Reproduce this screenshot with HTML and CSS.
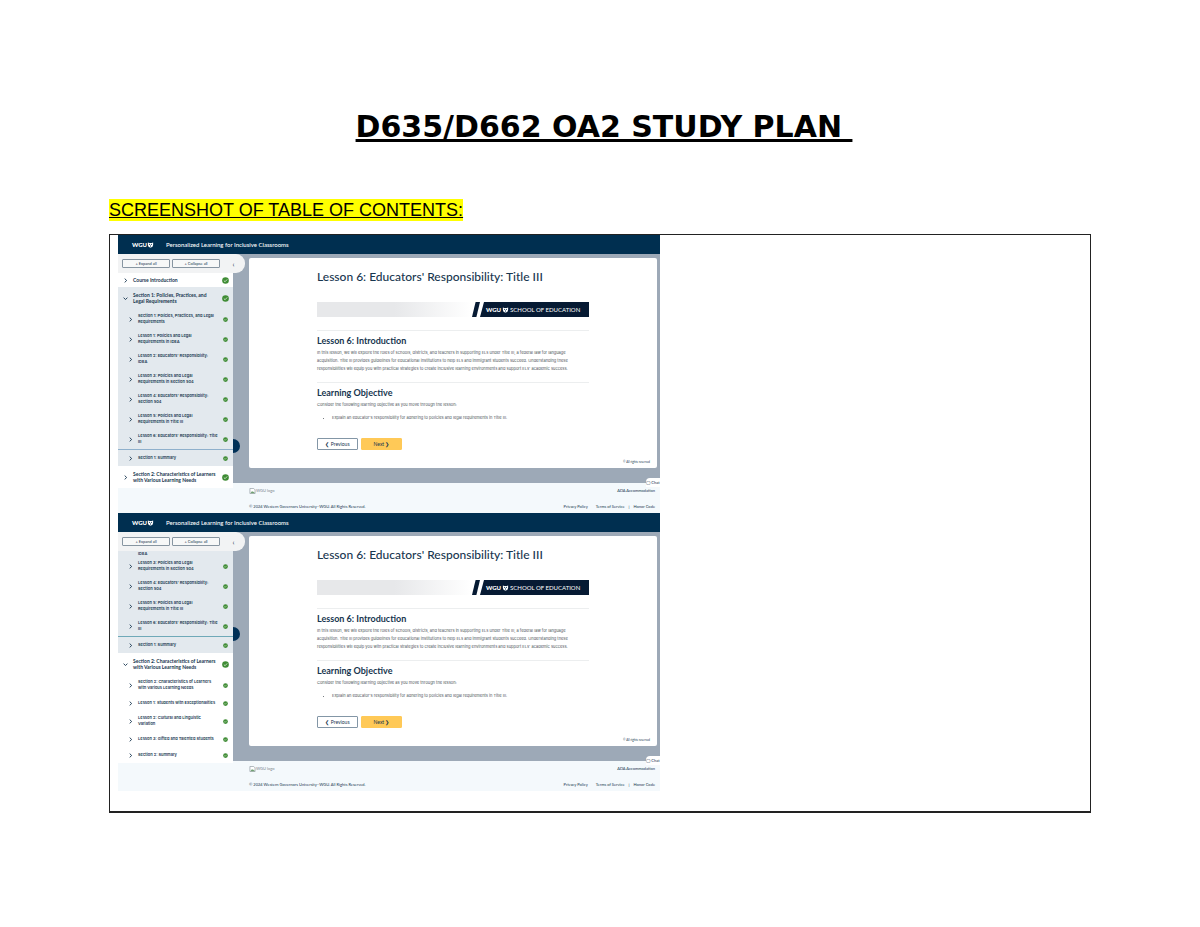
FILE: index.html
```html
<!DOCTYPE html>
<html lang="en">
<head>
  <meta charset="utf-8">
  <title>D635/D662 OA2 Study Plan</title>
  <link rel="stylesheet" href="styles.css">
</head>
<body>

  <!-- Shared icons -->
  <svg class="sprite" aria-hidden="true">
    <symbol id="chev" viewBox="0 0 6 6"><path d="M2 0.7 L4.4 3 L2 5.3" fill="none" stroke="#17364f" stroke-width="1.1"/></symbol>
    <symbol id="chev-down" viewBox="0 0 6 6"><path d="M0.7 2 L3 4.2 L5.3 2" fill="none" stroke="#17364f" stroke-width="1.1"/></symbol>
    <symbol id="check" viewBox="0 0 8 8"><circle cx="4" cy="4" r="3.8" fill="#3f8c35"/><path d="M2.1 4.1 L3.5 5.4 L5.9 2.8" fill="none" stroke="#e4f2e0" stroke-width="0.9"/></symbol>
    <symbol id="owl" viewBox="0 0 8 8"><path d="M0.5 0.5 L2.4 1.2 H5.6 L7.5 0.5 V4 Q7.5 6.5 4 7.8 Q0.5 6.5 0.5 4 Z" fill="#fff"/><circle cx="2.7" cy="3" r="0.8" fill="#002f50"/><circle cx="5.3" cy="3" r="0.8" fill="#002f50"/><path d="M4 4 V7" stroke="#002f50" stroke-width="0.7"/></symbol>
    <symbol id="broken" viewBox="0 0 7 7"><path d="M0.5 0.5 H4.8 L6.5 2.2 V6.5 H0.5 Z" fill="#fff" stroke="#8d979e" stroke-width="0.8"/><path d="M1 6 L3 3.5 L4.3 5 L5.2 4.2 L6 6 Z" fill="#6f9f72"/></symbol>
  </svg>

  <main class="page">
    <h1 class="title">D635/D662 OA2 STUDY PLAN&nbsp;</h1>
    <h2 class="subtitle"><mark>SCREENSHOT OF TABLE OF CONTENTS:</mark></h2>

    <div class="frame">

      <section class="shot">
        <header class="topbar">
          <span class="logo">WGU<svg><use href="#owl"/></svg></span>
          <span class="course">Personalized Learning for Inclusive Classrooms</span>
        </header>
        <div class="body">
          <nav class="sidebar">
            <div class="controls">
              <button class="ctl">+ Expand all</button>
              <button class="ctl">+ Collapse all</button>
              <button class="fold" aria-label="Hide menu">‹</button>
            </div>
            <div class="row intro"><svg class="arrow"><use href="#chev"/></svg><a href="#">Course Introduction</a><svg class="tick"><use href="#check"/></svg></div>
            <div class="row head shade"><svg class="arrow"><use href="#chev-down"/></svg><a href="#">Section 1: Policies, Practices, and<br>Legal Requirements</a><svg class="tick"><use href="#check"/></svg></div>
            <div class="row sub shade"><svg class="arrow"><use href="#chev"/></svg><a href="#">Section 1: Policies, Practices, and Legal<br>Requirements</a><svg class="tick"><use href="#check"/></svg></div>
            <div class="row sub shade"><svg class="arrow"><use href="#chev"/></svg><a href="#">Lesson 1: Policies and Legal<br>Requirements in IDEA</a><svg class="tick"><use href="#check"/></svg></div>
            <div class="row sub shade"><svg class="arrow"><use href="#chev"/></svg><a href="#">Lesson 2: Educators' Responsibility:<br>IDEA</a><svg class="tick"><use href="#check"/></svg></div>
            <div class="row sub shade"><svg class="arrow"><use href="#chev"/></svg><a href="#">Lesson 3: Policies and Legal<br>Requirements in Section 504</a><svg class="tick"><use href="#check"/></svg></div>
            <div class="row sub shade"><svg class="arrow"><use href="#chev"/></svg><a href="#">Lesson 4: Educators' Responsibility:<br>Section 504</a><svg class="tick"><use href="#check"/></svg></div>
            <div class="row sub shade"><svg class="arrow"><use href="#chev"/></svg><a href="#">Lesson 5: Policies and Legal<br>Requirements in Title III</a><svg class="tick"><use href="#check"/></svg></div>
            <div class="row sub shade current"><svg class="arrow"><use href="#chev"/></svg><a href="#">Lesson 6: Educators' Responsibility: Title<br>III</a><svg class="tick"><use href="#check"/></svg></div>
            <div class="row sub shade short"><svg class="arrow"><use href="#chev"/></svg><a href="#">Section 1: Summary</a><svg class="tick"><use href="#check"/></svg></div>
            <div class="row head"><svg class="arrow"><use href="#chev"/></svg><a href="#">Section 2: Characteristics of Learners<br>with Various Learning Needs</a><svg class="tick"><use href="#check"/></svg></div>
          </nav>
          <article class="card">
            <h3>Lesson 6: Educators' Responsibility: Title III</h3>
            <div class="banner">
              <span class="fade"></span>
              <span class="slash"></span>
              <span class="school"><b>WGU</b><svg><use href="#owl"/></svg>SCHOOL OF EDUCATION</span>
            </div>
            <section class="part">
              <h4>Lesson 6: Introduction</h4>
              <p>In this lesson, we will explore the roles of schools, districts, and teachers in supporting ELs under Title III, a federal law for language<br>acquisition. Title III provides guidelines for educational institutions to help ELs and immigrant students succeed. Understanding these<br>responsibilities will equip you with practical strategies to create inclusive learning environments and support ELs' academic success.</p>
            </section>
            <section class="part">
              <h4>Learning Objective</h4>
              <p>Consider the following learning objective as you move through the lesson:</p>
              <ul><li>Explain an educator's responsibility for adhering to policies and legal requirements in Title III.</li></ul>
            </section>
            <div class="buttons">
              <button class="btn">❮ Previous</button>
              <button class="btn next">Next ❯</button>
            </div>
            <small class="rights">© All rights reserved</small>
          </article>
          <span class="knob"></span>
          <button class="chat">◯ Chat</button>
        </div>
        <footer class="foot">
          <div><span class="missing"><svg><use href="#broken"/></svg>WGU logo</span><a href="#">ADA Accommodation</a></div>
          <div><span>© 2024 Western Governors University–WGU. All Rights Reserved.</span><span class="links"><a href="#" class="privacy">Privacy Policy</a><a href="#">Terms of Service</a><i>|</i><a href="#">Honor Code</a></span></div>
        </footer>
      </section>

      <section class="shot">
        <header class="topbar">
          <span class="logo">WGU<svg><use href="#owl"/></svg></span>
          <span class="course">Personalized Learning for Inclusive Classrooms</span>
        </header>
        <div class="body">
          <nav class="sidebar">
            <div class="controls">
              <button class="ctl">+ Expand all</button>
              <button class="ctl">+ Collapse all</button>
              <button class="fold" aria-label="Hide menu">‹</button>
            </div>
            <div class="row sub shade cut"><a href="#">IDEA</a></div>
            <div class="row sub shade"><svg class="arrow"><use href="#chev"/></svg><a href="#">Lesson 3: Policies and Legal<br>Requirements in Section 504</a><svg class="tick"><use href="#check"/></svg></div>
            <div class="row sub shade"><svg class="arrow"><use href="#chev"/></svg><a href="#">Lesson 4: Educators' Responsibility:<br>Section 504</a><svg class="tick"><use href="#check"/></svg></div>
            <div class="row sub shade"><svg class="arrow"><use href="#chev"/></svg><a href="#">Lesson 5: Policies and Legal<br>Requirements in Title III</a><svg class="tick"><use href="#check"/></svg></div>
            <div class="row sub shade current teal"><svg class="arrow"><use href="#chev"/></svg><a href="#">Lesson 6: Educators' Responsibility: Title<br>III</a><svg class="tick"><use href="#check"/></svg></div>
            <div class="row sub shade short"><svg class="arrow"><use href="#chev"/></svg><a href="#">Section 1: Summary</a><svg class="tick"><use href="#check"/></svg></div>
            <div class="row head"><svg class="arrow"><use href="#chev-down"/></svg><a href="#">Section 2: Characteristics of Learners<br>with Various Learning Needs</a><svg class="tick"><use href="#check"/></svg></div>
            <div class="row sub"><svg class="arrow"><use href="#chev"/></svg><a href="#">Section 2: Characteristics of Learners<br>with Various Learning Needs</a><svg class="tick"><use href="#check"/></svg></div>
            <div class="row sub short"><svg class="arrow"><use href="#chev"/></svg><a href="#">Lesson 1: Students with Exceptionalities</a><svg class="tick"><use href="#check"/></svg></div>
            <div class="row sub"><svg class="arrow"><use href="#chev"/></svg><a href="#">Lesson 2: Cultural and Linguistic<br>Variation</a><svg class="tick"><use href="#check"/></svg></div>
            <div class="row sub short"><svg class="arrow"><use href="#chev"/></svg><a href="#">Lesson 3: Gifted and Talented Students</a><svg class="tick"><use href="#check"/></svg></div>
            <div class="row sub short"><svg class="arrow"><use href="#chev"/></svg><a href="#">Section 2: Summary</a><svg class="tick"><use href="#check"/></svg></div>
          </nav>
          <article class="card">
            <h3>Lesson 6: Educators' Responsibility: Title III</h3>
            <div class="banner">
              <span class="fade"></span>
              <span class="slash"></span>
              <span class="school"><b>WGU</b><svg><use href="#owl"/></svg>SCHOOL OF EDUCATION</span>
            </div>
            <section class="part">
              <h4>Lesson 6: Introduction</h4>
              <p>In this lesson, we will explore the roles of schools, districts, and teachers in supporting ELs under Title III, a federal law for language<br>acquisition. Title III provides guidelines for educational institutions to help ELs and immigrant students succeed. Understanding these<br>responsibilities will equip you with practical strategies to create inclusive learning environments and support ELs' academic success.</p>
            </section>
            <section class="part">
              <h4>Learning Objective</h4>
              <p>Consider the following learning objective as you move through the lesson:</p>
              <ul><li>Explain an educator's responsibility for adhering to policies and legal requirements in Title III.</li></ul>
            </section>
            <div class="buttons">
              <button class="btn">❮ Previous</button>
              <button class="btn next">Next ❯</button>
            </div>
            <small class="rights">© All rights reserved</small>
          </article>
          <span class="knob raised"></span>
          <button class="chat">◯ Chat</button>
        </div>
        <footer class="foot">
          <div><span class="missing"><svg><use href="#broken"/></svg>WGU logo</span><a href="#">ADA Accommodation</a></div>
          <div><span>© 2024 Western Governors University–WGU. All Rights Reserved.</span><span class="links"><a href="#" class="privacy">Privacy Policy</a><a href="#">Terms of Service</a><i>|</i><a href="#">Honor Code</a></span></div>
        </footer>
      </section>

    </div>
  </main>

</body>
</html>
```
FILE: styles.css
```css
* {
  box-sizing: border-box;
}

body {
  margin: 0;
  background: #fff;
  color: #000;
  font-family: "Liberation Sans", Arial, sans-serif;
}

.sprite {
  display: none;
}

.page {
  padding: 109px 109px 40px;
}

.title {
  margin: 0;
  padding-left: 8px;
  text-align: center;
  font: bold 30px/36px "DejaVu Sans", sans-serif;
  text-decoration: underline;
  text-decoration-thickness: 3px;
  text-underline-offset: 2px;
  text-decoration-skip-ink: none;
}

.subtitle {
  margin: 54px 0 13px;
  font-size: 18px;
  line-height: 22px;
  font-weight: normal;
}

.subtitle mark {
  display: inline-block;
  background: #ff0;
  text-decoration: underline;
  text-decoration-thickness: 1px;
}

.frame {
  border: 1px solid #222;
  border-bottom-width: 2px;
  padding: 0 8px 20px;
}

/* One course page */
.shot {
  max-width: 542px;
  font-family: Lato, sans-serif;
  font-size: 4px;
  color: #17364f;
}

.shot a {
  color: inherit;
  text-decoration: none;
}

.shot button {
  font-family: inherit;
  color: inherit;
  padding: 0;
}

.topbar {
  display: flex;
  align-items: center;
  gap: 12px;
  height: 19px;
  padding-left: 14px;
  background: #002f50;
  color: #fff;
  font-size: 6px;
  font-weight: 500;
}

.logo {
  display: flex;
  align-items: center;
  font-weight: 900;
}

.logo svg,
.school svg {
  width: 7px;
  height: 6px;
}

.body {
  position: relative;
  display: flex;
  align-items: flex-start;
  height: 229px;
  background: #9da9b7;
}

/* Table of contents */
.sidebar {
  flex: none;
  width: 115px;
  background: #fff;
  position: relative;
  z-index: 1;
}

.controls {
  display: flex;
  align-items: center;
  gap: 2px;
  width: 127px;
  height: 19px;
  padding-left: 4px;
  background: #f2f3f4;
  border-radius: 0 9px 9px 0;
}

.ctl {
  width: 48px;
  height: 9px;
  border: 1px solid #8795a1;
  border-radius: 1px;
  background: #f7f8f8;
  font-size: 4px;
  line-height: 6px;
}

.fold {
  flex: 1;
  border: 0;
  background: none;
  font-size: 7px;
  line-height: 8px;
}

.row {
  display: flex;
  align-items: center;
  gap: 5px;
  height: 20px;
  padding: 0 4px 0 5px;
  font-size: 5px;
  line-height: 6px;
  font-weight: bold;
  white-space: nowrap;
}

.row a {
  flex: 1;
  min-width: 0;
}

.row.intro {
  height: 14px;
}

.row.head {
  height: 22px;
}

.row.sub {
  padding: 0 5px 0 10px;
  font-family: Inter, sans-serif;
  font-size: 4px;
  font-weight: 600;
}

.row.short {
  height: 16px;
}

.row.cut {
  height: 5px;
  padding-left: 20px;
  overflow: hidden;
}

.row.shade {
  background: #e3e9ee;
}

.row.current {
  height: 21px;
  border-bottom: 1px solid #8fb0cc;
}

.row.teal {
  border-color: #6fa9b8;
}

.arrow {
  width: 5px;
  height: 5px;
  flex: none;
}

.tick {
  width: 7px;
  height: 7px;
  flex: none;
}

.sub .tick {
  width: 5px;
  height: 5px;
}

.knob {
  position: absolute;
  left: 108px;
  top: 185px;
  width: 14px;
  height: 14px;
  border-radius: 50%;
  background: #003057;
}

.knob.raised {
  top: 95px;
}

/* Lesson */
.card {
  flex: 1;
  height: 210px;
  margin: 4px 3px 0 16px;
  padding: 13px 68px 0;
  background: #fff;
  border-radius: 2px;
  position: relative;
}

.card h3 {
  margin: 0 0 19px;
  font-size: 12px;
  line-height: 12px;
  font-weight: 500;
}

.card p,
.card ul {
  margin: 0;
  font-family: Inter, sans-serif;
  line-height: 8px;
  color: #4b5258;
  white-space: nowrap;
}

.banner {
  display: flex;
  height: 15px;
  margin-bottom: 13px;
}

.fade {
  flex: 1;
  background: linear-gradient(to right, #e7e8ea 50%, #fff);
}

.slash {
  width: 8px;
  background: #061a33;
  clip-path: polygon(45% 0, 100% 0, 55% 100%, 0 100%);
}

.school {
  display: flex;
  align-items: center;
  gap: 1px;
  width: 109px;
  padding-left: 6px;
  background: #061a33;
  clip-path: polygon(4px 0, 100% 0, 100% 100%, 0 100%);
  color: #fff;
  font-size: 6px;
  white-space: nowrap;
}

.school b {
  font-weight: 900;
}

.part {
  border-top: 1px solid #eceeef;
  padding-top: 5px;
  margin-bottom: 9px;
}

.card h4 {
  margin: 0 0 3px;
  font-size: 9px;
  line-height: 10px;
}

.card ul {
  margin-top: 5px;
  padding-left: 15px;
}

.buttons {
  display: flex;
  gap: 3px;
  margin-top: 16px;
}

.btn {
  width: 41px;
  height: 12px;
  border: 1px solid #8396a6;
  border-radius: 1px;
  background: #fff;
  font-size: 5px;
  line-height: 8px;
}

.btn.next {
  background: #ffc957;
  border-color: #ffc957;
}

.rights {
  position: absolute;
  right: 7px;
  bottom: 3px;
  font-size: 3px;
  line-height: 6px;
}

.chat {
  position: absolute;
  right: 0;
  bottom: -4px;
  width: 14px;
  height: 9px;
  border: 0;
  border-radius: 4px 0 0 0;
  background: #fff;
  font-size: 4px;
  line-height: 6px;
  white-space: nowrap;
}

.foot {
  display: flex;
  flex-direction: column;
  gap: 9px;
  height: 30px;
  padding: 4px 5px 0 131px;
  background: #f4f9fc;
  line-height: 7px;
}

.foot div {
  display: flex;
  justify-content: space-between;
}

.missing {
  display: flex;
  align-items: center;
  color: #7b858c;
}

.missing svg {
  width: 7px;
  height: 6px;
}

.links {
  display: flex;
  gap: 4px;
}

.privacy {
  margin-right: 4px;
}
```
